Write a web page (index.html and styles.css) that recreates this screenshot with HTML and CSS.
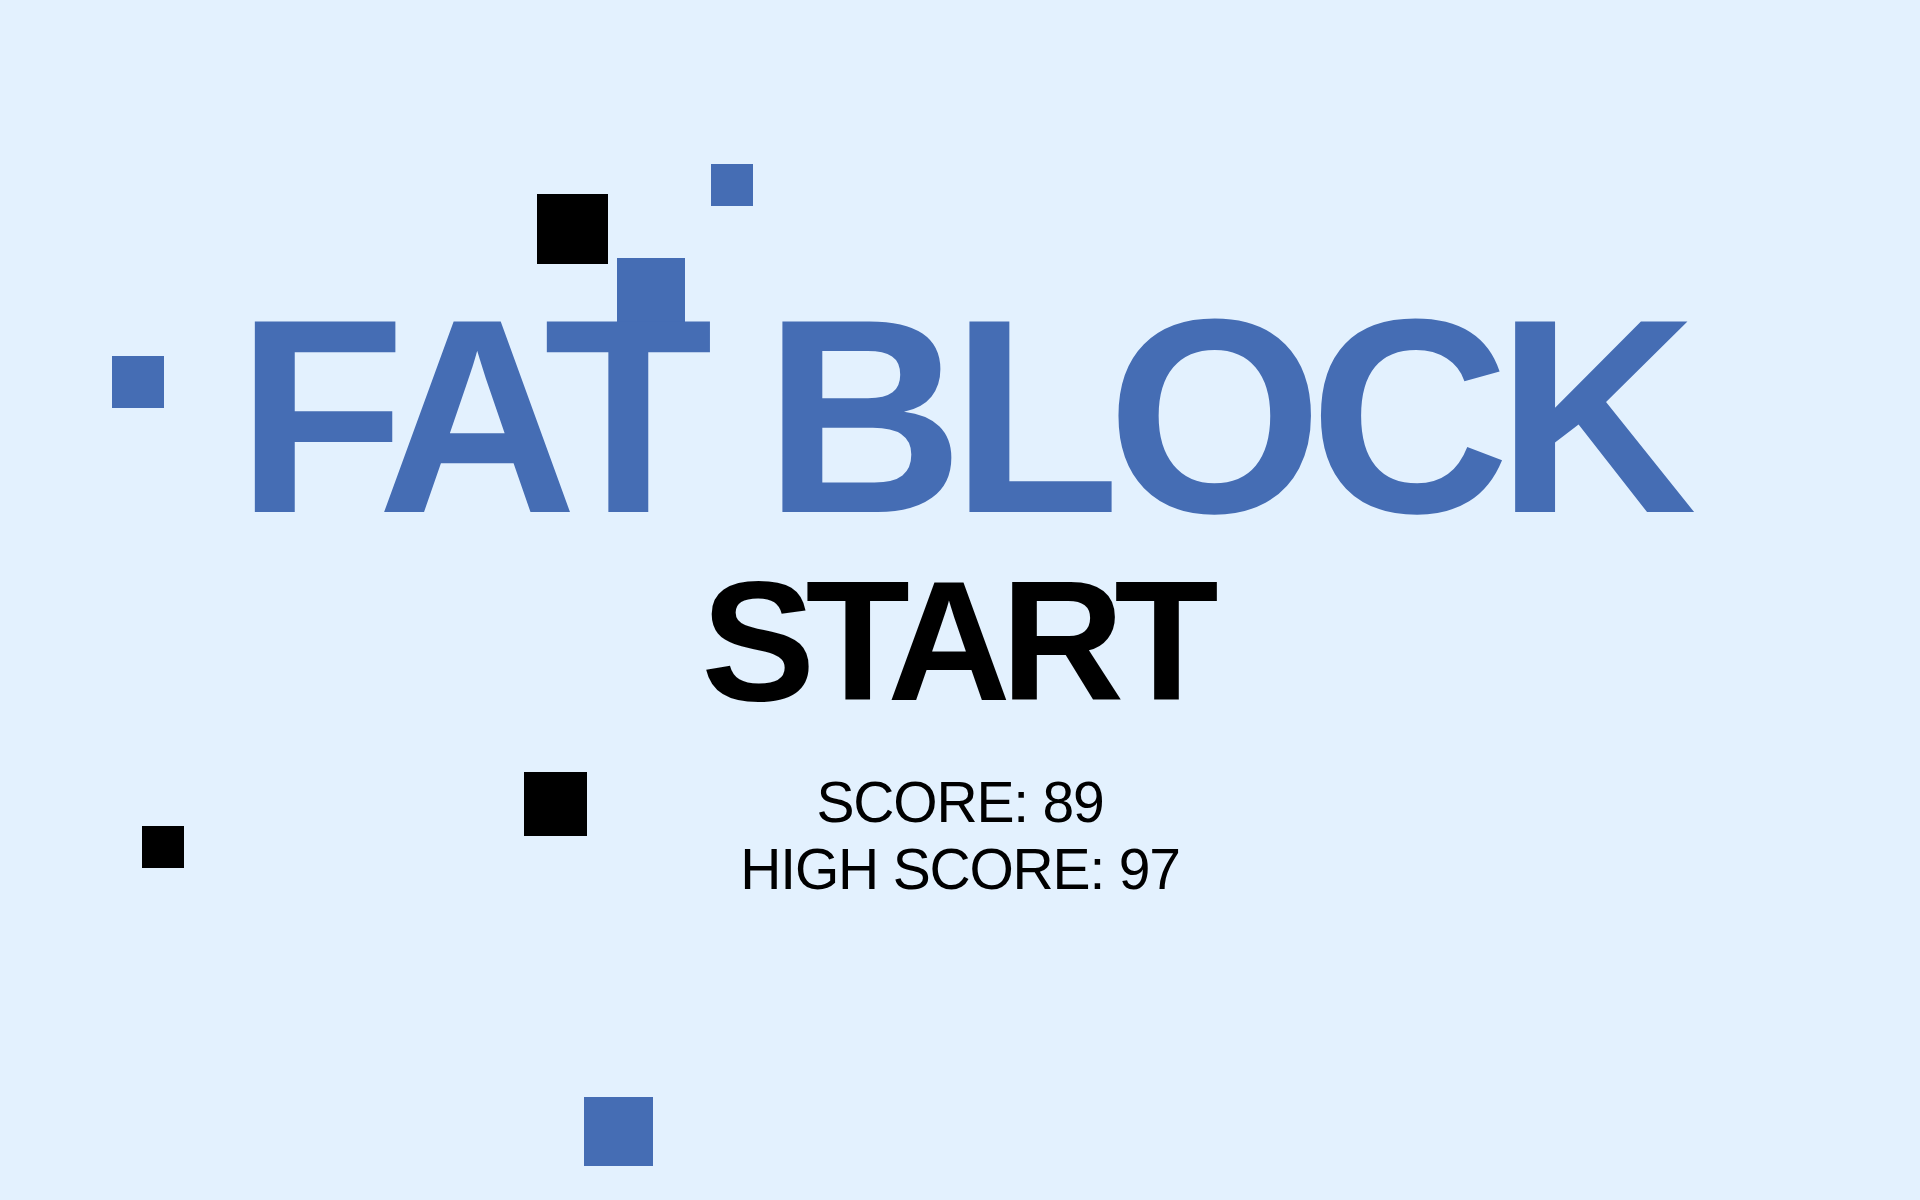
FILE: index.html
```html
<!DOCTYPE html>
<html lang="en">
<head>
  <meta charset="UTF-8" />
  <meta name="viewport" content="width=device-width, initial-scale=1.0" />
  <title>Fat Block</title>
  <link rel="stylesheet" href="styles.css">
</head>
<body>
  <div class="field">
    <div class="block blue" style="left:711px;top:164px;width:42px;height:42px"></div>
    <div class="block black" style="left:537px;top:194px;width:71px;height:70px"></div>
    <div class="block blue" style="left:617px;top:258px;width:68px;height:68px"></div>
    <div class="block blue" style="left:112px;top:356px;width:52px;height:52px"></div>
    <div class="block black" style="left:524px;top:772px;width:63px;height:64px"></div>
    <div class="block black" style="left:142px;top:826px;width:42px;height:42px"></div>
    <div class="block blue" style="left:584px;top:1097px;width:69px;height:69px"></div>
  </div>

  <div class="menu">
    <h1 class="title">FAT BLOCK</h1>
    <button class="start">START</button>
    <div class="scores">
      <div>SCORE: 89</div>
      <div>HIGH SCORE: 97</div>
    </div>
  </div>
</body>
</html>
```

FILE: styles.css
```css
body {
  margin: 0;
  height: 100vh;
  overflow: hidden;
  background: #e3f1fe;
  font-family: "Liberation Sans", Arial, sans-serif;
  color: #000;
}
.field {
  position: absolute;
  inset: 0;
}
.block {
  position: absolute;
}
.blue {
  background: #456db4;
}
.black {
  background: #000;
}
.menu {
  position: relative;
  display: flex;
  flex-direction: column;
  align-items: center;
  padding-top: 291px;
}
.title {
  margin: 0;
  font-size: 277px;
  line-height: 250px;
  font-weight: bold;
  color: #456db4;
  letter-spacing: -13px;
}
.start {
  margin: 25px 0 0;
  padding: 0 10px 0 0;
  border: none;
  background: none;
  font-family: inherit;
  font-size: 171px;
  line-height: 150px;
  font-weight: bold;
  letter-spacing: -10px;
  color: #000;
  cursor: pointer;
}
.scores {
  margin-top: 53px;
  font-size: 57px;
  line-height: 67px;
  letter-spacing: -1.2px;
  text-align: center;
}
```
